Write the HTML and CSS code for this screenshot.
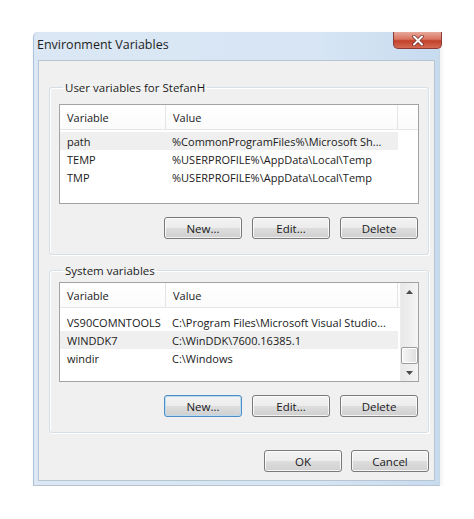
FILE: index.html
```html
<!DOCTYPE html>
<html>
<head>
<meta charset="utf-8">
<link rel="stylesheet" href="styles.css">
</head>
<body>
<div class="stage">
  <div class="window">
    <div class="titlebar">
      <span class="title">Environment Variables</span>
      <div class="close">
        <svg width="14" height="11" viewBox="0 0 14 11"><path d="M3 1.5 L11 9.5 M11 1.5 L3 9.5" stroke="#6b2a2a" stroke-width="3.4" stroke-linecap="round"/><path d="M3 1.5 L11 9.5 M11 1.5 L3 9.5" stroke="#ffffff" stroke-width="2" stroke-linecap="round"/></svg>
      </div>
    </div>
    <div class="client">
      <fieldset class="group">
        <legend>User variables for StefanH</legend>
        <div class="listbox">
          <div class="lhead">
            <div class="hc c1">Variable</div>
            <div class="hc c2">Value</div>
            <div class="hc c3"></div>
          </div>
          <div class="rows">
            <div class="row alt"><span class="c1">path</span><span class="c2">%CommonProgramFiles%\Microsoft Sh...</span></div>
            <div class="row"><span class="c1">TEMP</span><span class="c2">%USERPROFILE%\AppData\Local\Temp</span></div>
            <div class="row"><span class="c1">TMP</span><span class="c2">%USERPROFILE%\AppData\Local\Temp</span></div>
          </div>
        </div>
        <div class="btnrow">
          <button class="btn">New...</button>
          <button class="btn">Edit...</button>
          <button class="btn">Delete</button>
        </div>
      </fieldset>
      <fieldset class="group sys">
        <legend>System variables</legend>
        <div class="listbox scroll">
          <div class="lmain">
            <div class="lhead">
              <div class="hc c1">Variable</div>
              <div class="hc c2">Value</div>
            </div>
            <div class="rows sysrows">
              <div class="row"><span class="c1">VS90COMNTOOLS</span><span class="c2">C:\Program Files\Microsoft Visual Studio...</span></div>
              <div class="row alt"><span class="c1">WINDDK7</span><span class="c2">C:\WinDDK\7600.16385.1</span></div>
              <div class="row"><span class="c1">windir</span><span class="c2">C:\Windows</span></div>
            </div>
          </div>
          <div class="vscroll">
            <div class="arrow"><svg width="7" height="4" viewBox="0 0 7 4"><path d="M0 4 L3.5 0 L7 4 Z" fill="#4a4a4a"/></svg></div>
            <div class="track"><div class="thumb"></div></div>
            <div class="arrow"><svg width="7" height="4" viewBox="0 0 7 4"><path d="M0 0 L3.5 4 L7 0 Z" fill="#4a4a4a"/></svg></div>
          </div>
        </div>
        <div class="btnrow">
          <button class="btn default">New...</button>
          <button class="btn">Edit...</button>
          <button class="btn">Delete</button>
        </div>
      </fieldset>
      <div class="dlgbtns">
        <button class="btn">OK</button>
        <button class="btn">Cancel</button>
      </div>
    </div>
  </div>
</div>
</body>
</html>
```
FILE: styles.css
```css
html, body {
  margin: 0;
  padding: 0;
  background: #ffffff;
}
body {
  font-family: "Open Sans", "Noto Sans", sans-serif;
  font-size: 11px;
  color: #1a1a1a;
}
.stage {
  padding: 32px 0 0 33px;
}
.window {
  width: 407px;
  height: 454px;
  box-sizing: border-box;
  display: flex;
  flex-direction: column;
  padding: 0 4px 4px 4px;
  background: linear-gradient(90deg, #dbe7f4 0%, #d7e5f4 70%, #c7dbef 100%);
  border-left: 1px solid #a9c3df;
  border-right: 1px solid #c9d6e3;
  border-bottom: 1px solid #b9c3cc;
  border-radius: 5px 5px 0 0;
  box-shadow: 1px 2px 4px rgba(0,0,0,0.08);
}
.titlebar {
  height: 28px;
  display: flex;
  justify-content: space-between;
  align-items: flex-start;
  margin: 0 -5px 0 -4px;
}
.title {
  font-size: 12.5px;
  color: #1e1e1e;
  padding: 4px 0 0 3px;
}
.close {
  width: 47px;
  height: 16px;
  margin-right: -2px;
  display: flex;
  align-items: center;
  justify-content: center;
  border: 1px solid #8b3a3a;
  border-top: none;
  border-radius: 0 0 5px 5px;
  background: linear-gradient(#e7a99b 0%, #d9735f 45%, #c2412a 55%, #d56a52 100%);
}
.client {
  flex: 1;
  background: #f0f0f0;
  border: 1px solid #b8c6d4;
  display: flex;
  flex-direction: column;
  padding: 19px 5px 8px 10px;
}
.group {
  margin: 0;
  padding: 9px 9px 15px 9px;
  border: 1px solid #d5dfe5;
  border-radius: 3px;
  box-shadow: inset 1px 1px 0 #ffffff, 1px 1px 0 #ffffff;
  display: flex;
  flex-direction: column;
  gap: 13px;
}
.group.sys {
  margin-top: 8px;
  padding-top: 4px;
  gap: 13px;
}
.group legend {
  padding: 0 2px;
  margin-left: 4px;
  font-size: 11.5px;
}
.listbox {
  height: 100px;
  box-sizing: border-box;
  background: #ffffff;
  border: 1px solid #a3a3a3;
  display: flex;
  flex-direction: column;
}
.listbox.scroll {
  flex-direction: row;
}
.lmain {
  flex: 1;
  display: flex;
  flex-direction: column;
}
.lhead {
  height: 24px;
  display: flex;
  border-bottom: 1px solid #e5e5e5;
  background: linear-gradient(#ffffff, #fbfbfb);
}
.hc {
  display: flex;
  align-items: center;
  padding-left: 7px;
  box-sizing: border-box;
}
.hc.c1 {
  width: 106px;
  border-right: 1px solid #e5e5e5;
}
.hc.c2 {
  width: 232px;
  border-right: 1px solid #e5e5e5;
}
.hc.c3 {
  flex: 1;
}
.rows {
  padding-top: 2px;
  display: flex;
  flex-direction: column;
}
.rows.sysrows {
  padding-top: 5px;
}
.row {
  height: 18px;
  display: flex;
  align-items: center;
  width: 338px;
}
.row.alt {
  background: #efefef;
}
.row .c1 {
  width: 106px;
  padding-left: 7px;
  box-sizing: border-box;
}
.row .c2 {
  padding-left: 6px;
  white-space: nowrap;
}
.vscroll {
  width: 17px;
  display: flex;
  flex-direction: column;
  background: linear-gradient(90deg, #e8e8e8, #f4f4f4);
  border-left: 1px solid #ececec;
}
.arrow {
  height: 17px;
  display: flex;
  align-items: center;
  justify-content: center;
}
.track {
  flex: 1;
  display: flex;
  flex-direction: column;
  justify-content: flex-end;
}
.thumb {
  height: 15px;
  border: 1px solid #9b9b9b;
  border-radius: 2px;
  background: linear-gradient(90deg, #f6f6f6, #dedede);
  box-shadow: inset 0 0 0 1px #ffffff;
}
.btnrow {
  display: flex;
  justify-content: flex-end;
  gap: 10px;
  padding-right: 1px;
}
.btn {
  width: 78px;
  height: 22px;
  font-family: "Open Sans", "Noto Sans", sans-serif;
  font-size: 11.5px;
  color: #1a1a1a;
  padding: 0;
  border: 1px solid #7a7a7a;
  border-radius: 3px;
  background: linear-gradient(#f3f3f3 0%, #ececec 50%, #dddddd 51%, #d0d0d0 100%);
  box-shadow: inset 0 0 0 1px rgba(255,255,255,0.75);
}
.btn.default {
  border-color: #4d8cc4;
  box-shadow: inset 0 0 0 1px #b9dcf3;
}
.dlgbtns {
  margin-top: auto;
  display: flex;
  justify-content: flex-end;
  gap: 9px;
}
```
